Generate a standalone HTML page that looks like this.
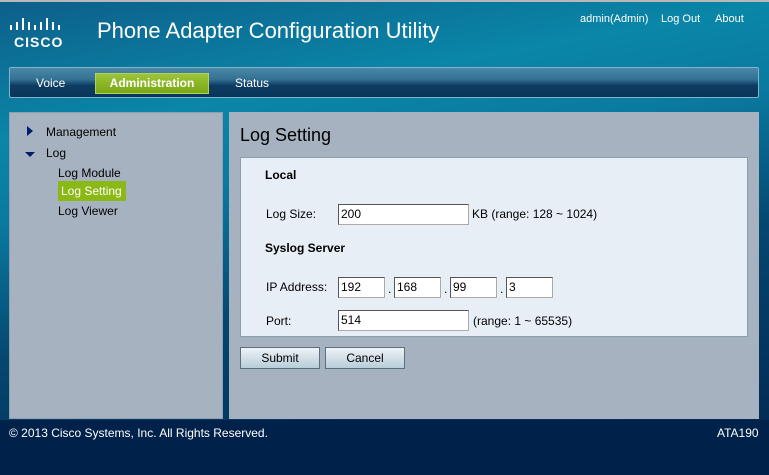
<!DOCTYPE html>
<html><head><style>
*{margin:0;padding:0;box-sizing:border-box}
body{width:769px;height:475px;overflow:hidden;font-family:"Liberation Sans",Arial,sans-serif;font-size:12px;position:relative;background:#00214a}
.hdr{position:absolute;left:0;top:0;width:769px;height:420px;border-top:2px solid #b8b8b8;background:linear-gradient(170deg,#0d5f8a 0%,#0a86a8 25%,#0a7aa0 40%,#05466f 65%,#022c55 100%)}
.abs{position:absolute}
.white{color:#fff}
.nav{left:9px;top:67px;width:750px;height:31px;border:1px solid #7fb4cc;border-radius:2px;background:linear-gradient(#4a88a8 0%,#336f92 40%,#0e3c62 60%,#0a3559 100%)}
.tab{position:absolute;top:5px;height:21px;line-height:21px;color:#fff;font-size:12px;text-align:center}
.left{left:9px;top:112px;width:214px;height:307px;background:#a6b2bf;border:1px solid #8ea0b0}
.right{left:229px;top:112px;width:530px;height:307px;background:#a6b2bf}
.box{left:240px;top:157px;width:508px;height:180px;background:#e7eef6;border:1px solid #8a9eae}
.inp{position:absolute;height:21px;background:#fff;border:1px solid #aaa;border-top-color:#555;border-left-color:#555;padding-left:2px;line-height:19px;font-size:12px}
.btn{position:absolute;top:347px;height:22px;border:1px solid #5a6f80;background:linear-gradient(#eef3f6,#b7cdd9);text-align:center;line-height:20px;font-size:12px}
.t{position:absolute;font-size:12px;color:#000}
</style></head><body>
<div class="hdr"></div>
<svg class="abs" style="left:9px;top:17px" width="60" height="34">
<g fill="#fff">
<rect x="1" y="8" width="2" height="5"/><rect x="7" y="5" width="2" height="8"/><rect x="13" y="1" width="2" height="12"/><rect x="19" y="5" width="2" height="8"/><rect x="25" y="8" width="2" height="5"/><rect x="31" y="5" width="2" height="8"/><rect x="37" y="1" width="2" height="12"/><rect x="43" y="5" width="2" height="8"/><rect x="49" y="8" width="2" height="5"/>
</g>
<text x="5" y="30" fill="#fff" font-family="Liberation Sans" font-weight="bold" font-size="14" letter-spacing="1">CISCO</text>
</svg>
<div class="abs white" style="left:97px;top:18px;font-size:22px">Phone Adapter Configuration Utility</div>
<div class="abs white" style="left:580px;top:13px;font-size:11px">admin(Admin)</div>
<div class="abs white" style="left:661px;top:13px;font-size:11px">Log Out</div>
<div class="abs white" style="left:715px;top:13px;font-size:11px">About</div>
<div class="abs nav">
<div class="tab" style="left:26px">Voice</div>
<div class="tab" style="left:85px;width:114px;background:linear-gradient(#9cc43a,#7aa814);border:1px solid #b0d060;font-weight:bold;line-height:19px">Administration</div>
<div class="tab" style="left:225px">Status</div>
</div>
<div class="abs left"></div>
<svg class="abs" style="left:25px;top:126px" width="12" height="34"><polygon points="2,0 8,5 2,10" fill="#001b6a"/><polygon points="0,26 10,26 5,31" fill="#001b6a"/></svg>
<div class="t" style="left:46px;top:125px">Management</div>
<div class="t" style="left:46px;top:146px">Log</div>
<div class="t" style="left:58px;top:166px">Log Module</div>
<div class="abs white" style="left:58px;top:181px;width:68px;height:20px;background:#8ab814;line-height:20px;padding-left:3px;font-size:12px">Log Setting</div>
<div class="t" style="left:58px;top:204px">Log Viewer</div>
<div class="abs right"></div>
<div class="abs" style="left:240px;top:125px;font-size:18px;color:#000">Log Setting</div>
<div class="abs box"></div>
<div class="t" style="left:265px;top:168px;font-weight:bold">Local</div>
<div class="t" style="left:266px;top:207px">Log Size:</div>
<div class="inp" style="left:338px;top:204px;width:131px">200</div>
<div class="t" style="left:472px;top:207px">KB (range: 128 ~ 1024)</div>
<div class="t" style="left:265px;top:241px;font-weight:bold">Syslog Server</div>
<div class="t" style="left:266px;top:280px">IP Address:</div>
<div class="inp" style="left:338px;top:277px;width:47px">192</div>
<div class="t" style="left:388px;top:282px">.</div>
<div class="inp" style="left:394px;top:277px;width:47px">168</div>
<div class="t" style="left:444px;top:282px">.</div>
<div class="inp" style="left:450px;top:277px;width:47px">99</div>
<div class="t" style="left:500px;top:282px">.</div>
<div class="inp" style="left:506px;top:277px;width:47px">3</div>
<div class="t" style="left:266px;top:314px">Port:</div>
<div class="inp" style="left:338px;top:310px;width:131px">514</div>
<div class="t" style="left:473px;top:314px">(range: 1 ~ 65535)</div>
<div class="btn" style="left:240px;width:80px">Submit</div>
<div class="btn" style="left:325px;width:80px">Cancel</div>
<div class="abs white" style="left:9px;top:426px;font-size:12px">© 2013 Cisco Systems, Inc. All Rights Reserved.</div>
<div class="abs white" style="left:717px;top:426px;font-size:12px">ATA190</div>
</body></html>
